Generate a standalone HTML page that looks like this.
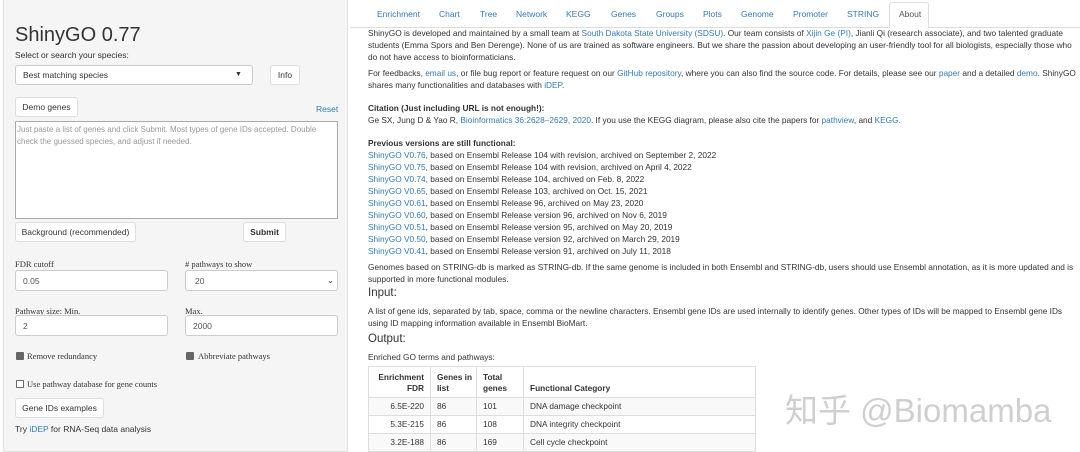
<!DOCTYPE html>
<html><head><meta charset="utf-8"><style>
*{box-sizing:border-box;margin:0;padding:0}
body{width:1080px;height:450px;overflow:hidden;background:#fff;font-family:"Liberation Sans",sans-serif;color:#333;position:relative;font-size:8.5px}
.a{position:absolute;white-space:nowrap}
#left{position:absolute;left:3px;top:0;width:345px;height:452px;background:#f5f5f5;border:1px solid #e3e3e3;border-top:none}
.box{position:absolute;background:#fff;border:1px solid #ccc;border-radius:3px}
.btn{position:absolute;background:#fff;border:1px solid #ddd;border-radius:3px;font-size:8.5px;color:#333;display:flex;align-items:center;justify-content:center}
.ser{font-family:"Liberation Serif",serif;font-size:8.5px}
a,.l{color:#337ab7}
.tab{position:absolute;top:9px;color:#337ab7;font-size:8.5px}
.p{position:absolute;left:368px;font-size:8.3px;line-height:12px;white-space:nowrap}
.chk{position:absolute;width:8px;height:8px;border-radius:1px}
table{position:absolute;left:368px;top:366px;width:388px;border-collapse:collapse;font-size:8.3px;table-layout:fixed}
td,th{border:1px solid #ddd;padding:0 6px;text-align:left;height:18px;line-height:11px;white-space:nowrap}
th{font-weight:bold;vertical-align:bottom;height:31px;padding-bottom:3px}
tr:nth-child(2) td{background:#f9f9f9}
tr:nth-child(4) td{background:#f9f9f9}
.r{text-align:right}
</style></head><body>
<div id="left"></div>
<div class="a" style="left:15px;top:24px;font-size:20px;color:#333">ShinyGO 0.77</div>
<div class="a" style="left:15px;top:50px">Select or search your species:</div>
<div class="box" style="left:15px;top:65px;width:238px;height:20px"></div>
<div class="a" style="left:23px;top:70px">Best matching species</div>
<div class="a" style="left:235px;top:71px;font-size:7px">▼</div>
<div class="btn" style="left:270px;top:65px;width:30px;height:20px">Info</div>
<div class="btn" style="left:15px;top:97px;width:63px;height:20px">Demo genes</div>
<div class="a l" style="left:316px;top:104px">Reset</div>
<div class="box" style="left:15px;top:121px;width:323px;height:98px;border-color:#aaa;border-radius:1px"></div>
<div class="a" style="left:17px;top:124px;color:#999;font-size:8px;line-height:12px;white-space:normal;width:318px">Just paste a list of genes and click Submit. Most types of gene IDs accepted. Double check the guessed species, and adjust if needed.</div>
<div class="btn" style="left:15px;top:222px;width:121px;height:20px">Background (recommended)</div>
<div class="btn" style="left:243px;top:222px;width:43px;height:20px;font-weight:bold">Submit</div>
<div class="a ser" style="left:15px;top:259px">FDR cutoff</div>
<div class="a ser" style="left:185px;top:259px"># pathways to show</div>
<div class="box" style="left:15px;top:270px;width:153px;height:21px"></div>
<div class="a" style="left:23px;top:276px;color:#555">0.05</div>
<div class="box" style="left:185px;top:270px;width:153px;height:21px"></div>
<div class="a" style="left:195px;top:276px;color:#555">20</div>
<div class="a" style="left:327px;top:276px;font-size:8px">⌄</div>
<div class="a ser" style="left:15px;top:306px">Pathway size: Min.</div>
<div class="a ser" style="left:185px;top:306px">Max.</div>
<div class="box" style="left:15px;top:315px;width:153px;height:21px"></div>
<div class="a" style="left:23px;top:321px;color:#555">2</div>
<div class="box" style="left:185px;top:315px;width:153px;height:21px"></div>
<div class="a" style="left:193px;top:321px;color:#555">2000</div>
<div class="chk" style="left:16px;top:352px;background:#666"></div>
<div class="a ser" style="left:27px;top:351px">Remove redundancy</div>
<div class="chk" style="left:186px;top:352px;background:#666"></div>
<div class="a ser" style="left:198px;top:351px">Abbreviate pathways</div>
<div class="chk" style="left:16px;top:380px;border:1px solid #666;background:#fff"></div>
<div class="a ser" style="left:27px;top:379px">Use pathway database for gene counts</div>
<div class="btn" style="left:15px;top:398px;width:89px;height:20px">Gene IDs examples</div>
<div class="a" style="left:15px;top:424px">Try <span class="l">iDEP</span> for RNA-Seq data analysis</div>

<div class="a" style="left:350px;top:27px;width:730px;border-top:1px solid #ddd"></div>
<div class="a" style="left:889px;top:2px;width:40px;height:26px;background:#fff;border:1px solid #ddd;border-bottom:none;border-radius:3px 3px 0 0"></div>
<span class="tab" style="left:377px">Enrichment</span><span class="tab" style="left:439px">Chart</span><span class="tab" style="left:480px">Tree</span><span class="tab" style="left:516px">Network</span><span class="tab" style="left:566px">KEGG</span><span class="tab" style="left:611px">Genes</span><span class="tab" style="left:656px">Groups</span><span class="tab" style="left:703px">Plots</span><span class="tab" style="left:741px">Genome</span><span class="tab" style="left:793px">Promoter</span><span class="tab" style="left:847px">STRING</span><span class="tab" style="left:899px;color:#555">About</span>

<div class="p" style="top:27px">ShinyGO is developed and maintained by a small team at <a>South Dakota State University (SDSU)</a>. Our team consists of <a>Xijin Ge (PI)</a>, Jianli Qi (research associate), and two talented graduate<br>students (Emma Spors and Ben Derenge). None of us are trained as software engineers. But we share the passion about developing an user-friendly tool for all biologists, especially those who<br>do not have access to bioinformaticians.</div>
<div class="p" style="top:67px">For feedbacks, <a>email us</a>, or file bug report or feature request on our <a>GitHub repository</a>, where you can also find the source code. For details, please see our <a>paper</a> and a detailed <a>demo</a>. ShinyGO<br>shares many functionalities and databases with <a>iDEP</a>.</div>
<div class="p" style="top:102px"><b>Citation (Just including URL is not enough!):</b><br>Ge SX, Jung D &amp; Yao R, <a>Bioinformatics 36:2628–2629, 2020</a>. If you use the KEGG diagram, please also cite the papers for <a>pathview</a>, and <a>KEGG</a>.</div>
<div class="p" style="top:137px"><b>Previous versions are still functional:</b><br>
<a>ShinyGO V0.76</a>, based on Ensembl Release 104 with revision, archived on September 2, 2022<br>
<a>ShinyGO V0.75</a>, based on Ensembl Release 104 with revision, archived on April 4, 2022<br>
<a>ShinyGO V0.74</a>, based on Ensembl Release 104, archived on Feb. 8, 2022<br>
<a>ShinyGO V0.65</a>, based on Ensembl Release 103, archived on Oct. 15, 2021<br>
<a>ShinyGO V0.61</a>, based on Ensembl Release 96, archived on May 23, 2020<br>
<a>ShinyGO V0.60</a>, based on Ensembl Release version 96, archived on Nov 6, 2019<br>
<a>ShinyGO V0.51</a>, based on Ensembl Release version 95, archived on May 20, 2019<br>
<a>ShinyGO V0.50</a>, based on Ensembl Release version 92, archived on March 29, 2019<br>
<a>ShinyGO V0.41</a>, based on Ensembl Release version 91, archived on July 11, 2018</div>
<div class="p" style="top:261px">Genomes based on STRING-db is marked as STRING-db. If the same genome is included in both Ensembl and STRING-db, users should use Ensembl annotation, as it is more updated and is<br>supported in more functional modules.</div>
<div class="p" style="top:286px;font-size:11.5px;line-height:14px">Input:</div>
<div class="p" style="top:305px">A list of gene ids, separated by tab, space, comma or the newline characters. Ensembl gene IDs are used internally to identify genes. Other types of IDs will be mapped to Ensembl gene IDs<br>using ID mapping information available in Ensembl BioMart.</div>
<div class="p" style="top:332px;font-size:11.5px;line-height:14px">Output:</div>
<div class="p" style="top:351px">Enriched GO terms and pathways:</div>
<table>
<colgroup><col style="width:62px"><col style="width:46px"><col style="width:47px"><col></colgroup>
<tr><th class="r">Enrichment<br>FDR</th><th>Genes in<br>list</th><th>Total<br>genes</th><th>Functional Category</th></tr>
<tr><td class="r">6.5E-220</td><td>86</td><td>101</td><td>DNA damage checkpoint</td></tr>
<tr><td class="r">5.3E-215</td><td>86</td><td>108</td><td>DNA integrity checkpoint</td></tr>
<tr><td class="r">3.2E-188</td><td>86</td><td>169</td><td>Cell cycle checkpoint</td></tr>
</table>
<div class="a" style="left:785px;top:384px;font-size:33px;color:rgba(160,160,160,0.5);font-family:'Liberation Sans','Noto Sans CJK SC',sans-serif">知乎 @Biomamba</div>
</body></html>
